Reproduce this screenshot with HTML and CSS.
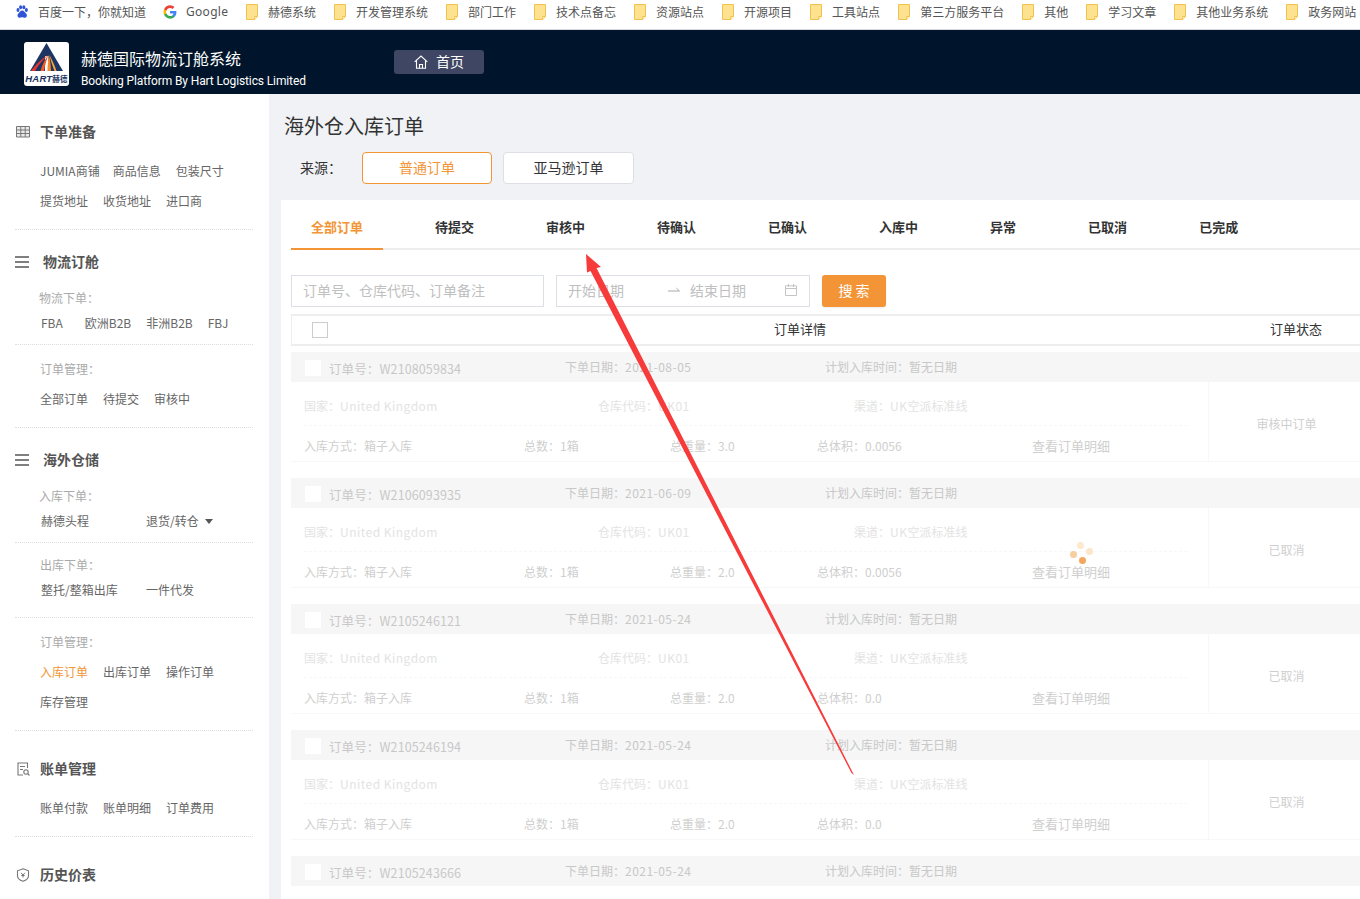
FILE: index.html
```html
<!DOCTYPE html>
<html lang="zh-CN">
<head>
<meta charset="utf-8">
<title>海外仓入库订单</title>
<link rel="stylesheet" href="styles.css">
</head>
<body>
<svg width="0" height="0" class="defs" aria-hidden="true">
  <symbol id="folder" viewBox="0 0 12 16">
    <path d="M.5.5h11v12.200l-2.800 2.800H.5z" fill="#ffe28f" stroke="#f2c14e"/>
    <path d="M8.700 15.500v-3h2.800" fill="#fff3c9" stroke="#f2c14e"/>
  </symbol>
  <symbol id="menu" viewBox="0 0 14 12">
    <path d="M0 1h14M0 6h14M0 11h14" stroke="#555" stroke-width="1.400" fill="none"/>
  </symbol>
</svg>

<nav class="bookmarks">
  <a class="bm"><svg class="bm-icon" viewBox="0 0 14 14"><g fill="#2f54d6"><ellipse cx="3" cy="5" rx="1.500" ry="2"/><ellipse cx="5.600" cy="2.200" rx="1.500" ry="2"/><ellipse cx="8.800" cy="2.200" rx="1.500" ry="2"/><ellipse cx="11.400" cy="5" rx="1.500" ry="2"/><path d="M7.200 5.400c-2 0-2.600 2-3.800 3-1.500 1.300-.9 4.300 1.400 4.300 1 0 1.500-.4 2.400-.4s1.500.4 2.500.4c2.300 0 2.800-3 1.300-4.300-1.200-1-1.800-3-3.800-3z"/></g></svg><span>百度一下，你就知道</span></a>
  <a class="bm bm-google"><svg class="bm-icon" viewBox="0 0 14 14"><path d="M13.400 7.200c0-.5 0-.9-.1-1.300H7v2.500h3.600c-.2.800-.6 1.500-1.300 2v1.600h2.100c1.300-1.100 2-2.800 2-4.800z" fill="#4285f4"/><path d="M7 13.700c1.800 0 3.300-.6 4.400-1.700L9.300 10.400c-.6.400-1.300.6-2.300.6-1.700 0-3.200-1.200-3.700-2.800H1.100v1.600c1.100 2.300 3.400 3.900 5.900 3.900z" fill="#34a853"/><path d="M3.300 8.200c-.3-.8-.3-1.600 0-2.400V4.200H1.100c-.9 1.800-.9 3.800 0 5.600z" fill="#fbbc05"/><path d="M7 3c1 0 1.800.3 2.500 1l1.900-1.900C10.300 1 8.800.3 7 .3 4.500.3 2.200 1.900 1.100 4.200l2.200 1.600C3.800 4.200 5.300 3 7 3z" fill="#ea4335"/></svg><span class="bm-latin">Google</span></a>
  <a class="bm"><svg class="bm-folder"><use href="#folder"/></svg><span>赫德系统</span></a>
  <a class="bm"><svg class="bm-folder"><use href="#folder"/></svg><span>开发管理系统</span></a>
  <a class="bm"><svg class="bm-folder"><use href="#folder"/></svg><span>部门工作</span></a>
  <a class="bm"><svg class="bm-folder"><use href="#folder"/></svg><span>技术点备忘</span></a>
  <a class="bm"><svg class="bm-folder"><use href="#folder"/></svg><span>资源站点</span></a>
  <a class="bm"><svg class="bm-folder"><use href="#folder"/></svg><span>开源项目</span></a>
  <a class="bm"><svg class="bm-folder"><use href="#folder"/></svg><span>工具站点</span></a>
  <a class="bm"><svg class="bm-folder"><use href="#folder"/></svg><span>第三方服务平台</span></a>
  <a class="bm"><svg class="bm-folder"><use href="#folder"/></svg><span>其他</span></a>
  <a class="bm"><svg class="bm-folder"><use href="#folder"/></svg><span>学习文章</span></a>
  <a class="bm"><svg class="bm-folder"><use href="#folder"/></svg><span>其他业务系统</span></a>
  <a class="bm"><svg class="bm-folder"><use href="#folder"/></svg><span>政务网站</span></a>
</nav>

<header class="topbar">
  <div class="logo">
    <svg class="logo-mark" viewBox="0 0 45 31">
      <path d="M22.500 1 39 29H6z" fill="#1c3563"/>
      <path d="M21 14l3.500 0L24 29h-3z" fill="#fff"/>
      <path d="M24 13c-5 3-12 9-17 16h4c3-6 8-11 13-16z" fill="#e8352b"/>
      <path d="M24.500 13c-3.500 4-6.500 10-8 16h3.500c1-6 2.500-11 4.500-16z" fill="#ee5a2a"/>
      <path d="M25 13c-1 5-1.500 11-1.500 16h3.500c-.2-5-.8-11-2-16z" fill="#f58a2e"/>
      <path d="M25.500 13c1 5 3 11 5 16h2c-1.800-5.500-4.500-11.500-7-16z" fill="#f7a63a"/>
    </svg>
    <span class="logo-text">HART<small>赫德</small></span>
  </div>
  <div class="brand">
    <div class="brand-title">赫德国际物流订舱系统</div>
    <div class="brand-sub">Booking Platform By Hart Logistics Limited</div>
  </div>
  <a class="home-btn">
    <svg class="home-icon" viewBox="0 0 14 14"><path d="M.7 6.800 7 1l6.300 5.800M2.500 5.500v7.800h9V5.500M5.500 13.300V9.500h3v3.800" fill="none" stroke="#fff" stroke-width="1.100"/></svg>
    <span class="home-text">首页</span>
  </a>
</header>

<div class="layout">
  <aside class="sidebar">
    <section class="sec sec-first">
      <h3 class="sec-title"><svg class="ti" viewBox="0 0 14 12"><path d="M.5.500h13v10.500H.5zM.5 4h13M.5 7.500h13M4.800.5V11M9.200.5V11" fill="#e9e9ec" stroke="#777"/></svg>下单准备</h3>
      <div class="links links-top">
        <a class="tight">JUMIA商铺</a><a>商品信息</a><a>包装尺寸</a>
        <a>提货地址</a><a>收货地址</a><a>进口商</a>
      </div>
    </section>
    <section class="sec sec-tight">
      <h3 class="sec-title title-menu"><svg class="ti"><use href="#menu"/></svg>物流订舱</h3>
      <div class="label label-first">物流下单：</div>
      <div class="links-one"><a class="first">FBA</a><a class="wide">欧洲B2B</a><a>非洲B2B</a><a>FBJ</a></div>
    </section>
    <section class="sec sub">
      <div class="label">订单管理：</div>
      <div class="links"><a>全部订单</a><a>待提交</a><a>审核中</a></div>
    </section>
    <section class="sec sec-tight">
      <h3 class="sec-title title-menu"><svg class="ti"><use href="#menu"/></svg>海外仓储</h3>
      <div class="label label-first">入库下单：</div>
      <div class="links-one"><a class="first col">赫德头程</a><a>退货/转仓 <i class="caret"></i></a></div>
    </section>
    <section class="sec sec-tight sub2">
      <div class="label">出库下单：</div>
      <div class="links-one"><a class="first col">整托/整箱出库</a><a>一件代发</a></div>
    </section>
    <section class="sec sub">
      <div class="label">订单管理：</div>
      <div class="links"><a class="on">入库订单</a><a>出库订单</a><a>操作订单</a><a class="brk">库存管理</a></div>
    </section>
    <section class="sec sec-first">
      <h3 class="sec-title"><svg class="ti" viewBox="0 0 14 14"><path d="M11.500 6V1H2v12h5M4 4.500h5M4 7.500h3" fill="none" stroke="#777" stroke-width="1.100"/><circle cx="10" cy="10" r="2.200" fill="none" stroke="#777" stroke-width="1.100"/><path d="M11.600 11.600 13.500 13.500" stroke="#777" stroke-width="1.100"/></svg>账单管理</h3>
      <div class="links links-top"><a>账单付款</a><a>账单明细</a><a>订单费用</a></div>
    </section>
    <section class="sec sec-first sec-last">
      <h3 class="sec-title"><svg class="ti" viewBox="0 0 14 14"><path d="M7 .8 12.500 2.800v5C12.500 10.800 9.500 12.500 7 13.300 4.500 12.500 1.500 10.800 1.500 7.800v-5z" fill="none" stroke="#777" stroke-width="1.100"/><path d="M5 4.800 7 7l2-2.200M7 7v2.500M5.300 7.500h3.400" fill="none" stroke="#777"/></svg>历史价表</h3>
    </section>
  </aside>

  <main class="main">
    <h1 class="page-title">海外仓入库订单</h1>
    <div class="source">
      <span class="source-label">来源：</span>
      <a class="src-btn active">普通订单</a>
      <a class="src-btn amazon">亚马逊订单</a>
    </div>

    <div class="card">
      <div class="tabs">
        <a class="tab active">全部订单</a><a class="tab">待提交</a><a class="tab">审核中</a><a class="tab">待确认</a><a class="tab">已确认</a><a class="tab">入库中</a><a class="tab">异常</a><a class="tab">已取消</a><a class="tab">已完成</a>
      </div>

      <div class="filters">
        <div class="input">订单号、仓库代码、订单备注</div>
        <div class="date">
          <span class="date-a">开始日期</span>
          <svg class="date-arrow" viewBox="0 0 12 6"><path d="M0 4h11.500L8.500 1.200" fill="none" stroke="#aaa"/></svg>
          <span>结束日期</span>
          <svg class="date-cal" viewBox="0 0 12 12"><path d="M.5 1.800h11v9.700H.5zM.5 4.500h11M3.500 0v3M8.500 0v3" fill="none" stroke="#c4c4c4"/></svg>
        </div>
        <a class="search">搜 索</a>
      </div>

      <div class="thead">
        <span class="check check-head"></span>
        <span class="th-detail">订单详情</span>
        <span class="th-status">订单状态</span>
      </div>

      <article class="order">
        <div class="o-head"><span class="check"></span><span class="o-no">订单号：W2108059834</span><span class="o-date">下单日期：<span class="num">2021-08-05</span></span><span>计划入库时间：暂无日期</span></div>
        <div class="o-body">
          <div class="o-info">
            <div class="o-l1"><span class="c1">国家：<span class="num">United Kingdom</span></span><span class="c2">仓库代码：<span class="num">UK01</span></span><span>渠道：<span class="num">UK</span>空派标准线</span></div>
            <div class="o-l2"><span class="d1">入库方式：箱子入库</span><span class="d2">总数：1箱</span><span class="d3">总重量：3.0</span><span class="d4">总体积：0.0056</span><a class="o-link">查看订单明细</a></div>
          </div>
          <div class="o-status">审核中订单</div>
        </div>
      </article>
      <article class="order">
        <div class="o-head"><span class="check"></span><span class="o-no">订单号：W2106093935</span><span class="o-date">下单日期：<span class="num">2021-06-09</span></span><span>计划入库时间：暂无日期</span></div>
        <div class="o-body">
          <div class="o-info">
            <div class="o-l1"><span class="c1">国家：<span class="num">United Kingdom</span></span><span class="c2">仓库代码：<span class="num">UK01</span></span><span>渠道：<span class="num">UK</span>空派标准线</span></div>
            <div class="o-l2"><span class="d1">入库方式：箱子入库</span><span class="d2">总数：1箱</span><span class="d3">总重量：2.0</span><span class="d4">总体积：0.0056</span><a class="o-link">查看订单明细</a></div>
          </div>
          <div class="o-status">已取消</div>
        </div>
      </article>
      <article class="order">
        <div class="o-head"><span class="check"></span><span class="o-no">订单号：W2105246121</span><span class="o-date">下单日期：<span class="num">2021-05-24</span></span><span>计划入库时间：暂无日期</span></div>
        <div class="o-body">
          <div class="o-info">
            <div class="o-l1"><span class="c1">国家：<span class="num">United Kingdom</span></span><span class="c2">仓库代码：<span class="num">UK01</span></span><span>渠道：<span class="num">UK</span>空派标准线</span></div>
            <div class="o-l2"><span class="d1">入库方式：箱子入库</span><span class="d2">总数：1箱</span><span class="d3">总重量：2.0</span><span class="d4">总体积：0.0</span><a class="o-link">查看订单明细</a></div>
          </div>
          <div class="o-status">已取消</div>
        </div>
      </article>
      <article class="order">
        <div class="o-head"><span class="check"></span><span class="o-no">订单号：W2105246194</span><span class="o-date">下单日期：<span class="num">2021-05-24</span></span><span>计划入库时间：暂无日期</span></div>
        <div class="o-body">
          <div class="o-info">
            <div class="o-l1"><span class="c1">国家：<span class="num">United Kingdom</span></span><span class="c2">仓库代码：<span class="num">UK01</span></span><span>渠道：<span class="num">UK</span>空派标准线</span></div>
            <div class="o-l2"><span class="d1">入库方式：箱子入库</span><span class="d2">总数：1箱</span><span class="d3">总重量：2.0</span><span class="d4">总体积：0.0</span><a class="o-link">查看订单明细</a></div>
          </div>
          <div class="o-status">已取消</div>
        </div>
      </article>
      <article class="order">
        <div class="o-head"><span class="check"></span><span class="o-no">订单号：W2105243666</span><span class="o-date">下单日期：<span class="num">2021-05-24</span></span><span>计划入库时间：暂无日期</span></div>
      </article>
    </div>
  </main>
</div>

<div class="spinner"><i class="dot d-a"></i><i class="dot d-b"></i><i class="dot d-c"></i><i class="dot d-e"></i></div>

<svg class="arrow" viewBox="0 0 1360 899"><polygon points="586,254 601,267 596.500,268 854,775 851.500,773 590.500,271 587,272.500" fill="#f73a3a"/></svg>
</body>
</html>
```

FILE: styles.css
```css
* { box-sizing: border-box; }
html, body { margin: 0; padding: 0; }
body {
  position: relative;
  width: 1360px;
  height: 899px;
  overflow: hidden;
  background: #fff;
  font-family: "Noto Sans CJK SC", "Noto Sans", sans-serif;
  font-size: 12px;
  color: #666;
}
a { color: inherit; text-decoration: none; }
.defs { position: absolute; }

/* bookmarks */
.bookmarks {
  display: flex;
  height: 30px;
  padding: 0 0 5px 15px;
  align-items: center;
  background: #fff;
  border-bottom: 1px solid #d8dbe0;
  white-space: nowrap;
  color: #555;
  line-height: 20px;
}
.bm { display: flex; align-items: center; flex: none; margin-right: 18px; }
.bm-icon { width: 14px; height: 14px; margin-right: 9px; }
.bm-google { margin-left: -1px; margin-right: 18px; }
.bm-latin { font-size: 12px; font-family: "Noto Sans", sans-serif; letter-spacing: .3px; width: 42px; }
.bm-folder { width: 12px; height: 16px; margin-right: 10px; }

/* top bar */
.topbar {
  display: flex;
  align-items: center;
  height: 64px;
  padding-left: 24px;
  background: #00152b;
  color: #fff;
}
.logo {
  width: 45px;
  height: 44px;
  margin-top: 4px;
  background: #fff;
  border-radius: 3px;
  display: flex;
  flex-direction: column;
  align-items: center;
  overflow: hidden;
}
.logo-mark { width: 45px; height: 31px; flex: none; }
.logo-text {
  font: italic 700 9.500px/11px "Liberation Sans", sans-serif;
  color: #1c3563;
  letter-spacing: .2px;
  white-space: nowrap;
}
.logo-text small { font-size: 7.500px; font-style: normal; font-family: "Noto Sans CJK SC", sans-serif; }
.brand { margin-left: 12px; width: 313px; margin-top: 13px; }
.brand-title { font-size: 16px; line-height: 24px; }
.brand-sub { font-family: Roboto, sans-serif; font-size: 12px; letter-spacing: -.12px; line-height: 20px; margin-top: 1px; white-space: nowrap; }
.home-btn {
  display: flex;
  align-items: center;
  justify-content: center;
  gap: 8px;
  width: 90px;
  height: 24px;
  background: #3e4663;
  border-radius: 3px;
  font-size: 14px;
}
.home-text { line-height: 20px; padding-bottom: 2px; }
.home-icon { width: 14px; height: 14px; }

/* layout */
.layout { display: flex; height: 805px; }
.sidebar {
  flex: none;
  width: 269px;
  background: #fff;
  padding-left: 15px;
  padding-right: 16px;
  overflow: hidden;
  box-shadow: 1px 0 2px rgba(0,0,0,.03);
}
.sec { border-bottom: 1px dotted #ddd; padding-bottom: 13px; }
.sec-first { padding-top: 28px; }
.sec-tight { padding-top: 22px; padding-bottom: 11px; }
.sub { padding-top: 14px; }
.sub2 { padding-top: 12px; padding-bottom: 17px; }
.sec-last { border-bottom: 0; }
.sec-title {
  display: flex;
  align-items: center;
  margin: 0;
  height: 20px;
  padding-bottom: 2px;
  font-size: 14px;
  font-weight: 700;
  color: #555;
  line-height: 18px;
}
.ti { width: 14px; height: 14px; margin: 2px 10px 0 1px; flex: none; }
.title-menu .ti { margin: 2px 14px 0 0; height: 12px; }
.links { display: flex; flex-wrap: wrap; column-gap: 15px; margin: 5px 0 0 25px; line-height: 30px; width: 200px; }
.links-top { margin-top: 14px; }
.links .tight { margin-right: -2px; }
.links .brk { flex: none; margin-right: 60px; }
.links-one { display: flex; margin: 5px 0 0 26px; line-height: 20px; column-gap: 15px; }
.links-one .first { margin-right: 7px; }
.links-one .col { width: 90px; margin-right: 0; }
.label { color: #aaa; line-height: 20px; margin-left: 25px; }
.label-first { margin-top: 16px; margin-left: 24px; }
.on { color: #f39536; }
.caret {
  display: inline-block;
  width: 0;
  height: 0;
  margin-left: 4px;
  border: 4px solid transparent;
  border-top: 5px solid #555;
  border-bottom: 0;
  vertical-align: 2px;
}

/* main */
.main {
  flex: 1;
  min-width: 0;
  background: #f0f2f5;
  padding-left: 12px;
  overflow: hidden;
}
.page-title {
  margin: 17px 0 0 3px;
  font-size: 20px;
  font-weight: 400;
  line-height: 30px;
  color: #333;
}
.source { display: flex; align-items: center; height: 32px; margin-top: 11px; }
.source-label { width: 81px; padding-left: 19px; font-size: 14px; line-height: 18px; padding-bottom: 2px; color: #333; }
.src-btn {
  width: 130px;
  height: 32px;
  margin-right: 11px;
  text-align: center;
  font-size: 14px;
  line-height: 28px;
  color: #333;
  background: #fff;
  border: 1px solid #dcdfe6;
  border-radius: 4px;
}
.src-btn.amazon { width: 131px; }
.src-btn.active { color: #f39536; border-color: #f39536; }

.card { margin-top: 16px; background: #fff; padding-left: 10px; width: 1200px; height: 720px; overflow: hidden; }
.tabs { display: flex; height: 50px; border-bottom: 2px solid #eee; column-gap: 32px; }
.tab {
  padding: 0 20px;
  height: 50px;
  font-size: 13px;
  font-weight: 700;
  line-height: 54px;
  color: #333;
}
.tab.active { color: #f39536; border-bottom: 2px solid #f39536; }

.filters { display: flex; margin-top: 25px; height: 32px; }
.input, .date {
  height: 32px;
  border: 1px solid #dcdfe6;
  font-size: 14px;
  line-height: 28px;
  color: #c0c0c0;
}
.input { width: 253px; padding-left: 11px; margin-right: 12px; }
.date { display: flex; align-items: center; width: 254px; padding: 0 0 2px 11px; margin-right: 12px; }
.date-a { width: 100px; }
.date-arrow { width: 12px; height: 6px; margin-right: 10px; }
.date-cal { width: 12px; height: 12px; margin-left: 39px; }
.search {
  width: 64px;
  height: 32px;
  border-radius: 3px;
  background: #f39536;
  color: #fff;
  font-size: 14px;
  line-height: 30px;
  text-align: center;
  box-shadow: 0 1px 2px rgba(0,0,0,.08);
}

.thead {
  display: flex;
  align-items: center;
  height: 32px;
  margin-top: 7px;
  padding-left: 20px;
  border-style: solid;
  border-width: 2px 0 2px 1px;
  border-color: #eee;
  font-size: 13px;
  color: #333;
}
.thead .th-detail, .thead .th-status { margin-bottom: 4px; }
.check { display: block; width: 16px; height: 16px; background: #fff; flex: none; }
.check-head { border: 1px solid #ccc; }
.thead .th-detail { margin-left: 446px; width: 496px; }

.order { margin-top: 6px; }
.order + .order { margin-top: 16px; }
.o-head {
  display: flex;
  align-items: center;
  height: 30px;
  padding: 0 0 2px 14px;
  background: #f6f6f6;
  color: #c8c8c8;
}
.o-head .check { margin-right: 8px; margin-top: 3px; }
.o-no { width: 236px; font-size: 12.500px; letter-spacing: .12px; padding-top: 4px; }
.o-date { width: 260px; }
.num { letter-spacing: .48px; }
.o-body { display: flex; height: 80px; border-bottom: 1px solid #f7f7f7; }
.o-info { width: 917px; padding: 0 21px 0 13px; }
.o-l1 {
  display: flex;
  height: 44px;
  padding-top: 13px;
  border-bottom: 1px dashed #f7f7f7;
  font-size: 12px;
  line-height: 22px;
  color: #e3e3e3;
}
.c1 { width: 294px; }
.c2 { width: 256px; }
.o-l2 { display: flex; line-height: 20px; padding-top: 10px; color: #cfcfcf; width: 850px; }
.d1 { width: 220px; }
.d2 { width: 146px; }
.d3 { width: 147px; }
.d4 { width: 215px; }
.o-link { font-size: 13px; }
.o-status {
  width: 156px;
  border-left: 1px solid #f7f7f7;
  text-align: center;
  line-height: 84px;
  color: #cfcfcf;
}

/* overlays */
.spinner { position: absolute; left: 1070px; top: 541px; width: 24px; height: 24px; }
.dot { position: absolute; width: 7px; height: 7px; border-radius: 50%; }
.d-a { left: 7px; top: 1px; background: #fde9cc; }
.d-b { left: 16px; top: 7px; background: #fce5c8; }
.d-c { left: 0; top: 10px; background: #f8cda0; }
.d-e { left: 9px; top: 16px; background: #f3a75c; }
.arrow { position: absolute; left: 0; top: 0; width: 1360px; height: 899px; pointer-events: none; }
```
